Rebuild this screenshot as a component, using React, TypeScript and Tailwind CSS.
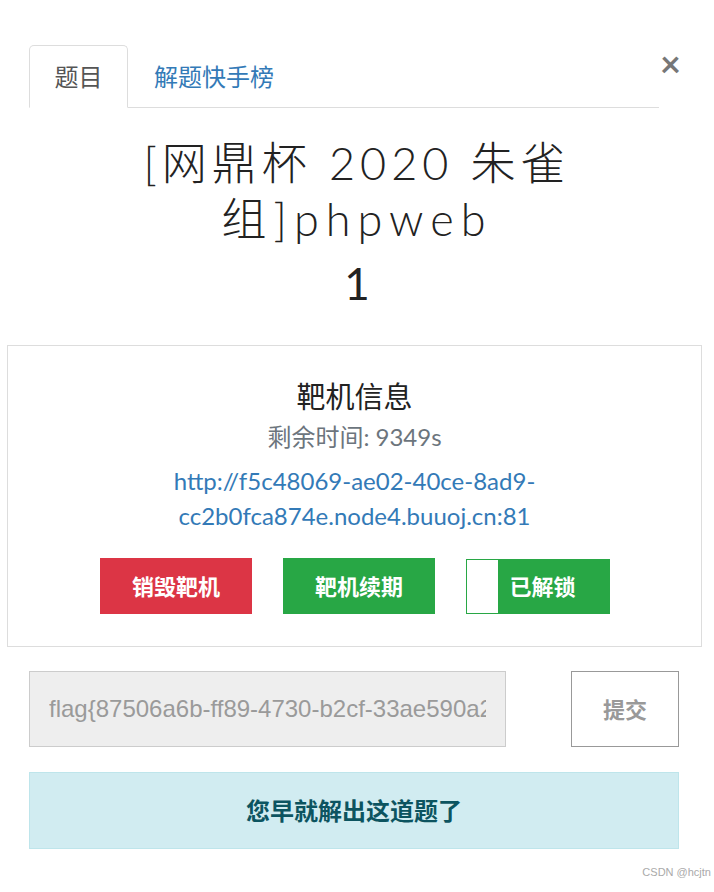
import { useState } from 'react';

const latin = 'font-["Lato","Noto_Sans_CJK_SC",sans-serif]';

export default function App() {
  const [tab, setTab] = useState<'q' | 'rank'>('q');
  const [flag, setFlag] = useState('flag{87506a6b-ff89-4730-b2cf-33ae590a2c1e}');

  return (
    <div className={`relative w-[714px] h-[892px] bg-white overflow-hidden ${latin}`}>
      {/* tabs header */}
      <div className="flex items-start pt-[45px] pl-[29px]">
        <div className="flex w-[630px] border-b border-[#dddddd] h-[63px]">
          <button
            onClick={() => setTab('q')}
            className={`w-[99px] h-[63px] -mb-px rounded-t-[5px] text-[24px] text-[#555555] ${tab === 'q' ? 'border border-[#dddddd] border-b-white bg-white' : ''}`}
          >
            题目
          </button>
          <button
            onClick={() => setTab('rank')}
            className="h-[63px] px-[26px] text-[24px] text-[#337ab7]"
          >
            解题快手榜
          </button>
        </div>
        <button className="ml-[1px] w-[20px] text-center text-[36px] leading-[36px] font-bold text-[#777777]">
          ×
        </button>
      </div>

      {/* title */}
      <h1 className='mt-[27px] text-center text-[45px] leading-[56px] tracking-[5px] text-[#222222] font-["Lato","Noto_Sans_CJK_SC",sans-serif] font-light'>
        [网鼎杯 2020 朱雀
        <br />
        <span className="tracking-[7px]">组]phpweb</span>
      </h1>
      <div className="mt-[8px] text-center text-[44px] leading-[56px] text-[#222222]">1</div>

      {/* target box */}
      <div className="ml-[7px] mr-[12px] mt-[34px] border border-[#dddddd] pt-[31px] pb-[32px] flex flex-col items-center">
        <h3 className="text-[29px] leading-[40px] text-[#222222]">靶机信息</h3>
        <div className="mt-[5px] text-[24px] leading-[30px] text-[#6c757d]">剩余时间: 9349s</div>
        <a className="mt-[11px] text-[24px] leading-[35px] text-[#337ab7] text-center w-[420px] break-all">
          http://f5c48069-ae02-40ce-8ad9-
          <br />
          cc2b0fca874e.node4.buuoj.cn:81
        </a>
        <div className="mt-[25px] flex items-center gap-[31px] pl-[1px]">
          <button className="w-[152px] h-[56px] bg-[#dc3545] text-white text-[22px] font-bold">销毁靶机</button>
          <button className="w-[152px] h-[56px] bg-[#28a745] text-white text-[22px] font-bold">靶机续期</button>
          <button className="relative w-[144px] h-[55px] bg-[#28a745] border border-[#28a745] text-white text-[22px] font-bold flex items-center">
            <span className="w-[31px] h-full bg-white" />
            <span className="flex-1 text-center pr-[22px]">已解锁</span>
          </button>
        </div>
      </div>

      {/* flag input */}
      <div className="mt-[24px] ml-[29px] mr-[35px] flex items-center justify-between">
        <input
          value={flag}
          onChange={e => setFlag(e.target.value)}
          className='w-[477px] h-[76px] bg-[#eeeeee] border border-[#cccccc] px-[19px] text-[24px] text-[#9a9a9a] font-["Liberation_Sans",Arial,sans-serif] outline-none'
        />
        <button className="w-[108px] h-[76px] border border-[#999999] text-[22px] font-bold text-[#999999] bg-white">
          提交
        </button>
      </div>

      {/* solved alert */}
      <div className="mt-[25px] ml-[29px] mr-[35px] h-[77px] bg-[#d1ecf1] border border-[#bee5eb] flex items-center justify-center text-[24px] font-bold text-[#0c5460]">
        您早就解出这道题了
      </div>

      <div className='absolute right-[3px] bottom-[12px] text-[11px] text-[#aaaaaa] font-["Liberation_Sans",sans-serif]'>
        CSDN @hcjtn
      </div>
    </div>
  );
}
